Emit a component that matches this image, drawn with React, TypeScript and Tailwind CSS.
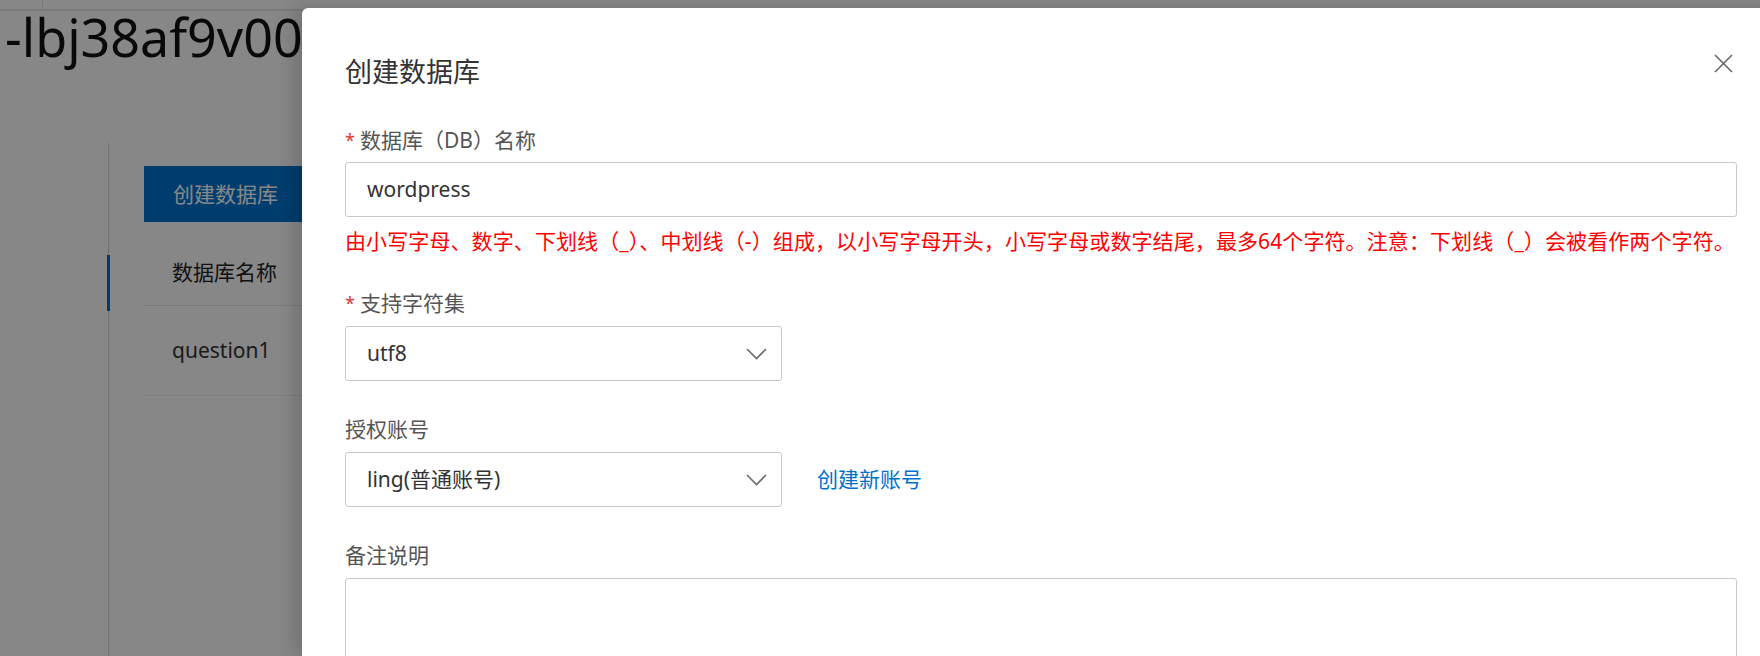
import React from "react";

const FONT = "font-['Noto_Sans','Noto_Sans_CJK_SC',sans-serif]";

function Chevron() {
  return (
    <svg width="21" height="12" viewBox="0 0 21 12" fill="none" className="shrink-0">
      <polyline points="1,1 10.5,10.5 20,1" stroke="#6b6b6b" strokeWidth="1.6" />
    </svg>
  );
}

function Label({ required, children, className = "" }: { required?: boolean; children: React.ReactNode; className?: string }) {
  return (
    <div className={`h-[28px] leading-[28px] text-[21px] text-[#555] flex items-center ${className}`}>
      {required && <span className="text-[18px] text-[#e3342f] mr-[5px]">*</span>}
      <span>{children}</span>
    </div>
  );
}

function Select({ value }: { value: string }) {
  return (
    <div className="w-[437px] h-[55px] border border-[#c6c9cf] rounded-[3px] bg-white flex items-center justify-between pl-[21px] pr-[14px]">
      <span className="text-[21px] text-[#333]">{value}</span>
      <Chevron />
    </div>
  );
}

export default function App() {
  return (
    <div className={`relative w-[1760px] h-[656px] overflow-hidden bg-white ${FONT}`}>
      {/* page header */}
      <header className="h-[9px] bg-white flex shadow-[0_1px_3px_rgba(0,0,0,0.18)]">
        <div className="w-[43px] h-full border-r border-[#e2e2e2]" />
      </header>

      {/* instance title */}
      <h1 className="mt-[2px] pl-[5px] text-[52px] leading-none text-[#111] whitespace-nowrap">-lbj38af9v00</h1>

      {/* side tabs + database list */}
      <div className="mt-[80px] ml-[108px] h-[520px] border-l border-[#d6d6d6] pl-[35px] pt-[23px] relative">
        <div className="absolute left-[-2px] top-[112px] w-[3px] h-[56px] bg-[#0070cc]" />
        <div className="inline-block h-[56px] leading-[56px] bg-[#0073d1] text-white text-[21px] px-[29px]">创建数据库</div>
        <div className="mt-[18px] w-[420px]">
          <div className="h-[66px] flex items-center pl-[28px] text-[21px] text-[#222] border-b border-[#e6e6e6]">数据库名称</div>
          <div className="h-[90px] flex items-center pl-[28px] text-[21px] text-[#333] bg-white border-b border-[#ececec]">question1</div>
        </div>
      </div>

      {/* mask */}
      <div className="absolute inset-0 bg-[rgba(0,0,0,0.47)]" />

      {/* drawer */}
      <div className="absolute left-[302px] top-[8px] bottom-0 w-[1478px] bg-white rounded-tl-[6px] shadow-[-8px_0_18px_rgba(0,0,0,0.16)] px-[43px] pt-[46px]">
        <button className="absolute left-[1412px] top-[46px] w-[19px] h-[19px]" aria-label="close">
          <svg width="19" height="19" viewBox="0 0 19 19" fill="none">
            <line x1="1" y1="1" x2="18" y2="18" stroke="#666" strokeWidth="1.6" />
            <line x1="18" y1="1" x2="1" y2="18" stroke="#666" strokeWidth="1.6" />
          </svg>
        </button>

        <h2 className="text-[27px] leading-[36px] text-[#333]">创建数据库</h2>

        <div className="mt-[36px]">
          <Label required className="mb-[8px]">数据库（DB）名称</Label>
          <div className="w-[1392px] h-[55px] border border-[#c6c9cf] rounded-[3px] flex items-center px-[21px] text-[21px] text-[#333]">
            wordpress
          </div>
          <div className="mt-[10px] leading-[28px] text-[21px] tracking-[0.1px] text-[#ff0000] whitespace-nowrap">
            由小写字母、数字、下划线（_）、中划线（-）组成，以小写字母开头，小写字母或数字结尾，最多64个字符。注意：下划线（_）会被看作两个字符。
          </div>
        </div>

        <div className="mt-[34px]">
          <Label required className="mb-[9px]">支持字符集</Label>
          <Select value="utf8" />
        </div>

        <div className="mt-[34px]">
          <Label className="mb-[9px]">授权账号</Label>
          <div className="flex items-center">
            <Select value="ling(普通账号)" />
            <span className="ml-[35px] text-[21px] text-[#0070cc]">创建新账号</span>
          </div>
        </div>

        <div className="mt-[34px]">
          <Label className="mb-[9px]">备注说明</Label>
          <div className="w-[1392px] h-[140px] border border-[#c6c9cf] rounded-[3px]" />
        </div>
      </div>
    </div>
  );
}
